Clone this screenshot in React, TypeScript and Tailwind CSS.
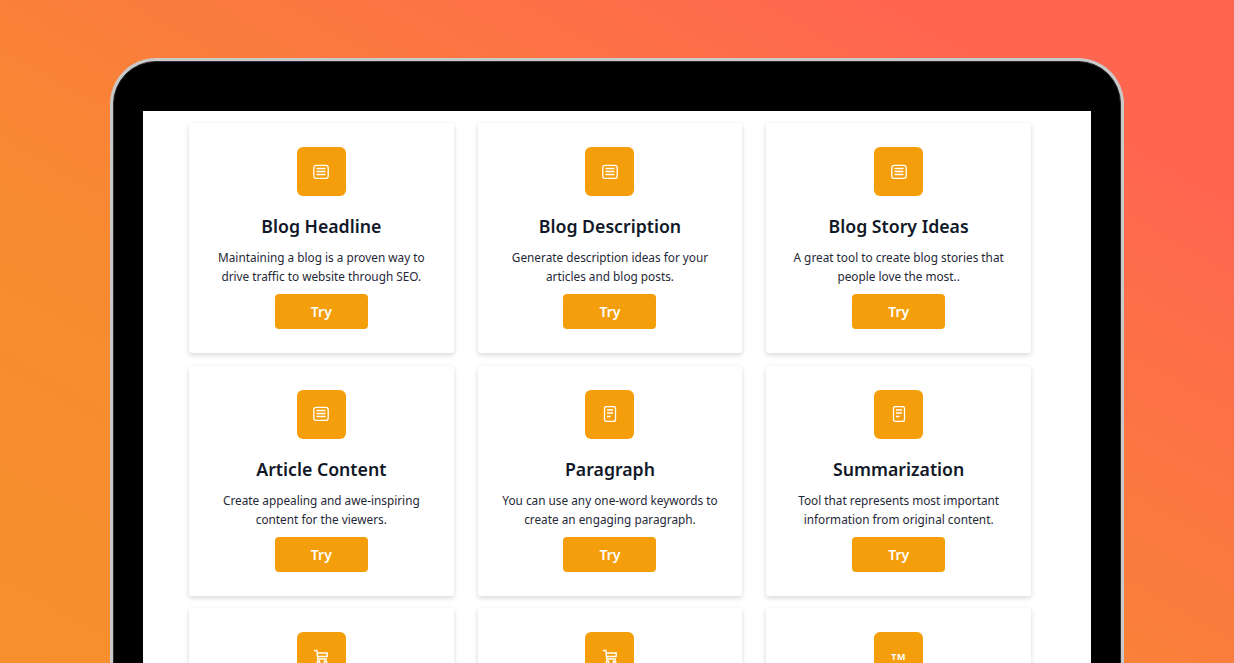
import React from 'react';

type Kind = 'list' | 'doc' | 'cart' | 'tm';

interface Tool {
  title?: string;
  lines?: [string, string];
  kind: Kind;
}

const tools: Tool[] = [
  { title: 'Blog Headline', lines: ['Maintaining a blog is a proven way to', 'drive traffic to website through SEO.'], kind: 'list' },
  { title: 'Blog Description', lines: ['Generate description ideas for your', 'articles and blog posts.'], kind: 'list' },
  { title: 'Blog Story Ideas', lines: ['A great tool to create blog stories that', 'people love the most..'], kind: 'list' },
  { title: 'Article Content', lines: ['Create appealing and awe-inspiring', 'content for the viewers.'], kind: 'list' },
  { title: 'Paragraph', lines: ['You can use any one-word keywords to', 'create an engaging paragraph.'], kind: 'doc' },
  { title: 'Summarization', lines: ['Tool that represents most important', 'information from original content.'], kind: 'doc' },
  { kind: 'cart' },
  { kind: 'cart' },
  { kind: 'tm' },
];

const ToolIcon = ({ kind }: { kind: Kind }) => {
  if (kind === 'tm') {
    return <span className="text-[9px] font-bold leading-none tracking-[0.5px] text-white">TM</span>;
  }
  if (kind === 'cart') {
    return (
      <svg width="16" height="16" viewBox="0 0 16 16" fill="none" stroke="#fff" strokeWidth="1.4">
        <path d="M1 1.5h2.8l1 8.5h9.2" />
        <path d="M4 4h10.2v3.5H4.5" />
        <circle cx="5.5" cy="13" r="1.3" />
        <circle cx="12.5" cy="13" r="1.3" />
      </svg>
    );
  }
  if (kind === 'doc') {
    return (
      <svg width="16" height="16" viewBox="0 0 16 16" fill="none" stroke="#fff">
        <rect x="2.5" y="0.5" width="11" height="15" rx="2" strokeWidth="1.3" />
        <path d="M5 4h6M5 7h6M5 10.5h3.5" strokeWidth="1.6" />
      </svg>
    );
  }
  return (
    <svg width="16" height="16" viewBox="0 0 16 16" fill="none" stroke="#fff">
      <rect x="0.8" y="1.3" width="14.4" height="13" rx="2.4" strokeWidth="1.3" />
      <path d="M3.5 4.5h9M3.5 7.5h9M3.5 10.5h9" strokeWidth="1.3" />
    </svg>
  );
};

const ToolCard = ({ tool }: { tool: Tool }) => (
  <div className="flex h-[230px] flex-col items-center rounded-[3px] bg-white pt-6 shadow-[0_2px_5px_rgba(0,0,0,0.16)]">
    <div className="flex h-[49px] w-[49px] shrink-0 items-center justify-center rounded-[6px] bg-[#f59e0b]">
      <ToolIcon kind={tool.kind} />
    </div>
    {tool.title && tool.lines && (
      <>
        <h3 className="mt-[17px] text-center text-[17.7px] leading-[26px] font-semibold text-[#111827]">{tool.title}</h3>
        <p className="mt-[9px] text-center text-[11.8px] leading-[19px] text-[#1f2937]">
          {tool.lines[0]}
          <br />
          {tool.lines[1]}
        </p>
        <button className="mt-[8px] h-[35px] w-[93px] rounded-[4px] bg-[#f59e0b] text-[14px] font-semibold text-white">
          Try
        </button>
      </>
    )}
  </div>
);

export default function App() {
  return (
    <div
      className="h-[663px] w-[1234px] overflow-hidden bg-[linear-gradient(30deg,#f6902c_0%,#f88a31_35%,#ff6650_85%,#ff6650_100%)] pt-[58px] pl-[110px]"
      style={{ fontFamily: '"Noto Sans", "Open Sans", sans-serif' }}
    >
      <div className="h-[700px] w-[1014px] rounded-t-[46px] bg-[#c9c9c9] px-[3px] pt-[3px]">
        <div className="h-full rounded-t-[43px] border border-[#2a2a2a] bg-black px-[29px] pt-[49px]">
          <div className="h-full bg-white pt-[12px] pr-[60px] pl-[46px]">
            <div className="grid grid-cols-3 gap-x-6 gap-y-[12.5px]">
              {tools.map((tool, i) => (
                <ToolCard key={i} tool={tool} />
              ))}
            </div>
          </div>
        </div>
      </div>
    </div>
  );
}
